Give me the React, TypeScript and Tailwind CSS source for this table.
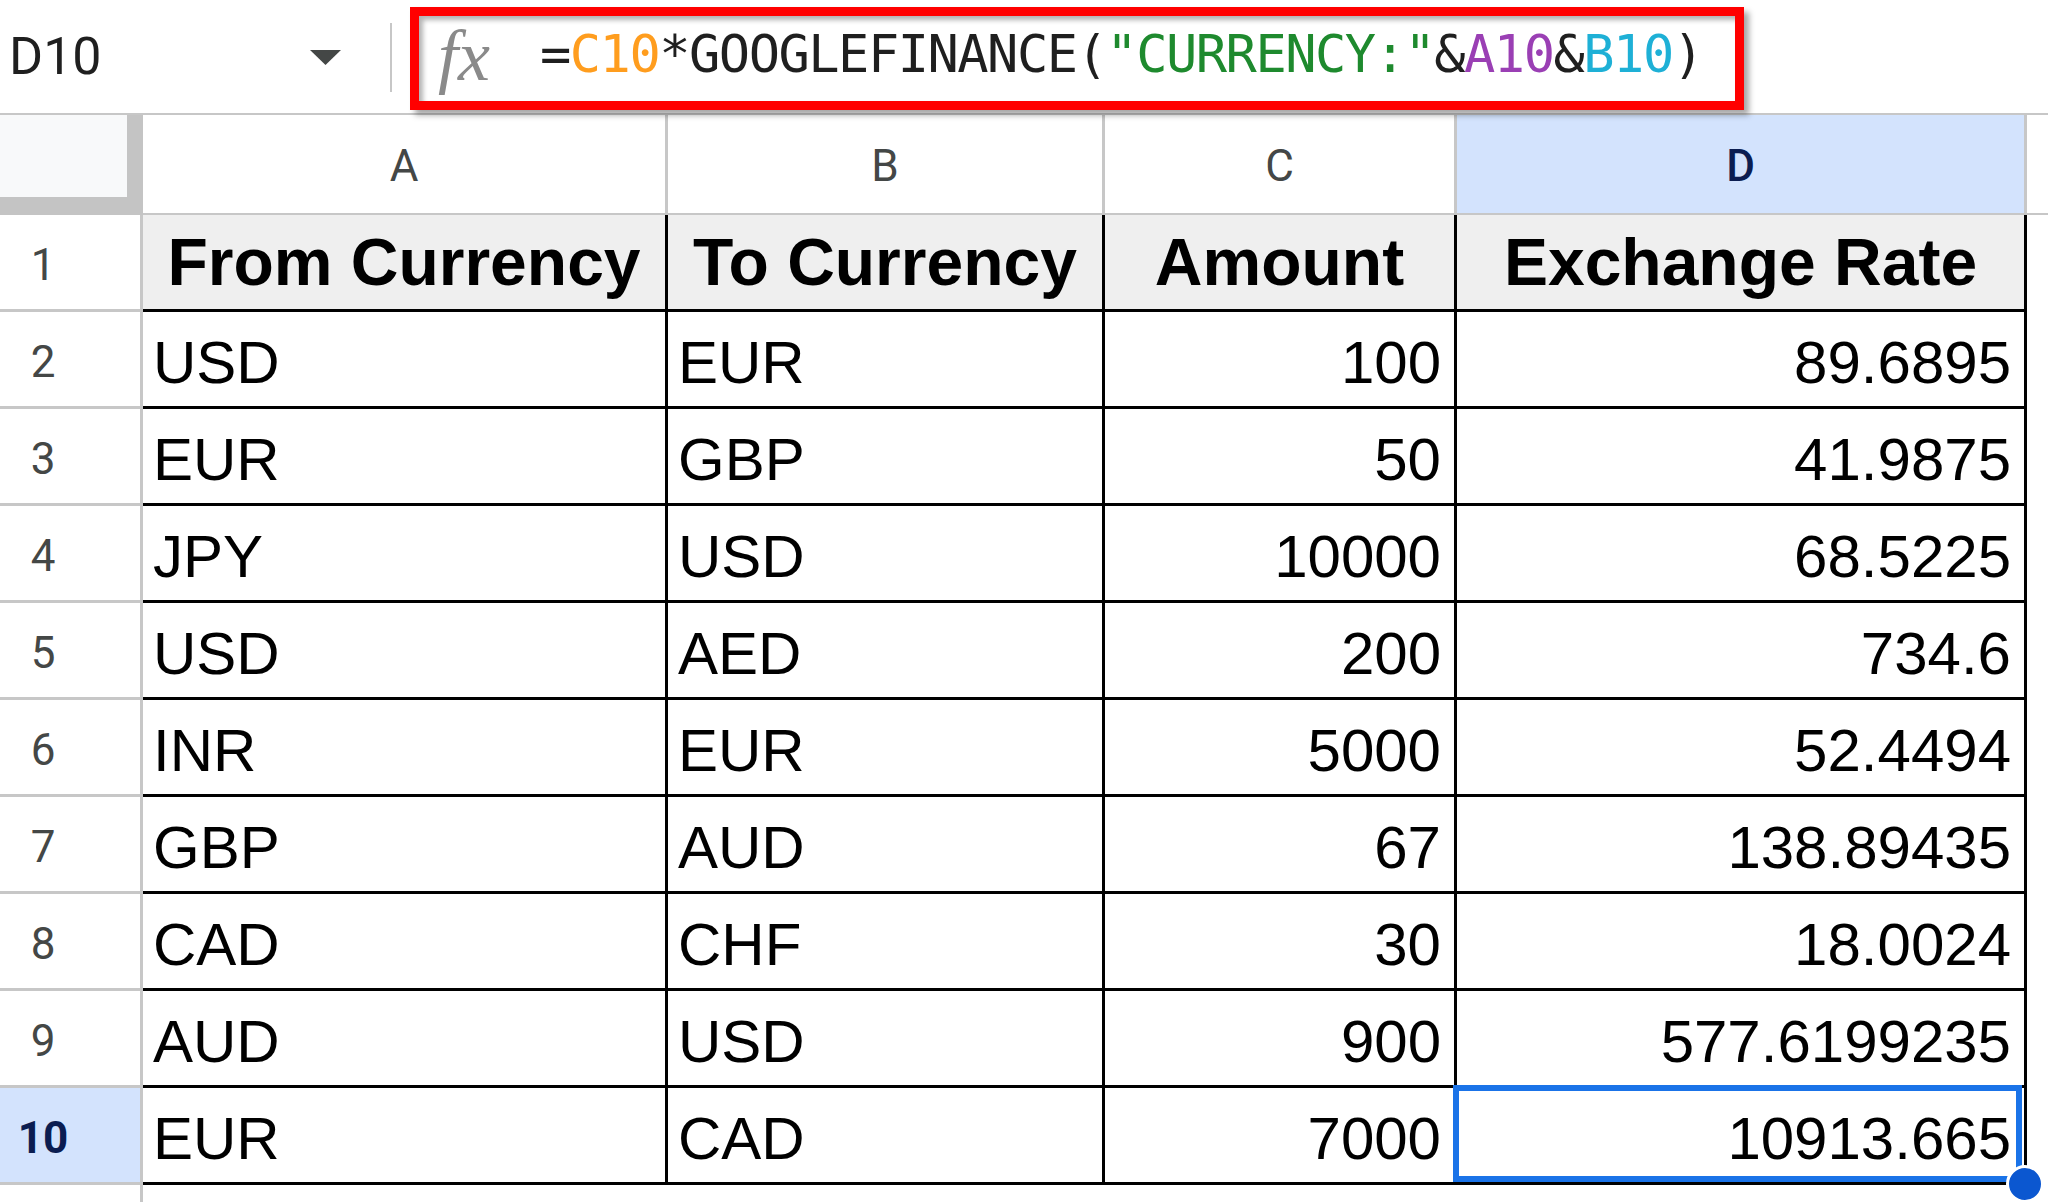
const rows = [
  ["USD", "EUR", "100", "89.6895"],
  ["EUR", "GBP", "50", "41.9875"],
  ["JPY", "USD", "10000", "68.5225"],
  ["USD", "AED", "200", "734.6"],
  ["INR", "EUR", "5000", "52.4494"],
  ["GBP", "AUD", "67", "138.89435"],
  ["CAD", "CHF", "30", "18.0024"],
  ["AUD", "USD", "900", "577.6199235"],
  ["EUR", "CAD", "7000", "10913.665"],
];

const colW = ["w-[525px]", "w-[437px]", "w-[352px]", "w-[570px]"];

function TopBar() {
  return (
    <div className="flex h-[115px] items-start border-b-2 border-[#c7c7c7] bg-white">
      <div className="flex h-[113px] w-[390px] items-center justify-between pl-[9px] pr-[49px]">
        <span className="font-['Roboto',sans-serif] text-[52px] leading-none text-[#1f1f1f]">D10</span>
        <svg width="31" height="15" viewBox="0 0 31 15" className="mt-[2px]">
          <path d="M0 0 L31 0 L15.5 15 Z" fill="#444746" />
        </svg>
      </div>
      <div className="mt-[23px] h-[69px] w-[2px] bg-[#c7c7c7]" />
      <div className="relative z-10 ml-[18px] mt-[7px] flex h-[103px] w-[1334px] items-start border-[9px] border-[#ff0000] bg-white pl-[19px] shadow-[5px_5px_6px_rgba(0,0,0,0.35),inset_4px_4px_5px_rgba(0,0,0,0.3)]">
        <span className="mt-[4px] w-[60px] font-['Liberation_Serif',serif] text-[72px] italic leading-none text-[#8a8a8a]">
          fx
        </span>
        <span className="ml-[42px] mt-[12px] font-['DejaVu_Sans_Mono',monospace] text-[52px] leading-none tracking-[-1.5px] text-[#1f1f1f]">
          =<span className="text-[#ff9d1e]">C10</span>*GOOGLEFINANCE(
          <span className="text-[#1e8a2e]">"CURRENCY:"</span>&amp;
          <span className="text-[#9a3fb4]">A10</span>&amp;
          <span className="text-[#1eb0d6]">B10</span>)
        </span>
      </div>
    </div>
  );
}

function ColumnHeaders() {
  const letters = ["A", "B", "C", "D"];
  return (
    <div className="flex h-[100px]">
      <div className="relative h-[100px] w-[143px] bg-[#c4c4c4]">
        <div className="h-[82px] w-[127px] bg-[#f8f9fa]" />
      </div>
      {letters.map((l, i) => (
        <div
          key={l}
          className={`${colW[i]} flex items-end justify-center border-b-2 border-r-[3px] border-[#c7c7c7] pb-[25px] font-['Roboto',sans-serif] text-[44px] leading-none ${
            l === "D" ? "bg-[#d3e3fd] font-medium text-[#0b1d51]" : "bg-white text-[#444746]"
          }`}
        >
          {l}
        </div>
      ))}
      <div className="flex-1 border-b-2 border-[#c7c7c7]" />
    </div>
  );
}

function RowHeader({ n, selected }: { n: number; selected?: boolean }) {
  return (
    <div
      className={`flex w-[143px] items-end border-b-[3px] border-r-[3px] border-[#c7c7c7] pb-[22px] ${
        selected ? "bg-[#d3e3fd]" : "bg-white"
      }`}
    >
      <div
        className={`w-[86px] text-center font-['Roboto',sans-serif] text-[44px] leading-none ${
          selected ? "font-bold text-[#0b1d51]" : "text-[#444746]"
        }`}
      >
        {n}
      </div>
    </div>
  );
}

export default function App() {
  const headers = ["From Currency", "To Currency", "Amount", "Exchange Rate"];
  return (
    <div className="h-[1202px] w-[2048px] overflow-hidden bg-white font-['Liberation_Sans',Arial,sans-serif] text-black">
      <TopBar />
      <ColumnHeaders />

      <div className="flex h-[97px]">
        <RowHeader n={1} />
        {headers.map((h, i) => (
          <div
            key={h}
            className={`${colW[i]} flex items-end justify-center border-b-[3px] border-r-[3px] border-black bg-[#efefef] pb-[14px] text-[66px] font-bold leading-none`}
          >
            {h}
          </div>
        ))}
        <div className="flex-1" />
      </div>

      {rows.map((r, idx) => {
        const n = idx + 2;
        const sel = n === 10;
        return (
          <div key={n} className="flex h-[97px]">
            <RowHeader n={n} selected={sel} />
            {r.map((v, i) => (
              <div
                key={i}
                className={`${colW[i]} relative flex items-end border-b-[3px] border-r-[3px] border-black pb-[13px] text-[60px] leading-none ${
                  i < 2 ? "justify-start pl-[10px]" : "justify-end pr-[13px]"
                }`}
              >
                {v}
                {sel && i === 3 && (
                  <>
                    <div className="absolute -left-[4px] -top-[3px] bottom-0 right-[2px] border-[6px] border-[#1a73e8]" />
                    <div className="absolute left-[549px] top-[77px] h-[38px] w-[38px] rounded-full border-[3px] border-white bg-[#0b57d0]" />
                  </>
                )}
              </div>
            ))}
            <div className="flex-1" />
          </div>
        );
      })}

      <div className="flex h-[40px]">
        <div className="w-[143px] border-r-[3px] border-[#c7c7c7]" />
        <div className="flex-1" />
      </div>
    </div>
  );
}
